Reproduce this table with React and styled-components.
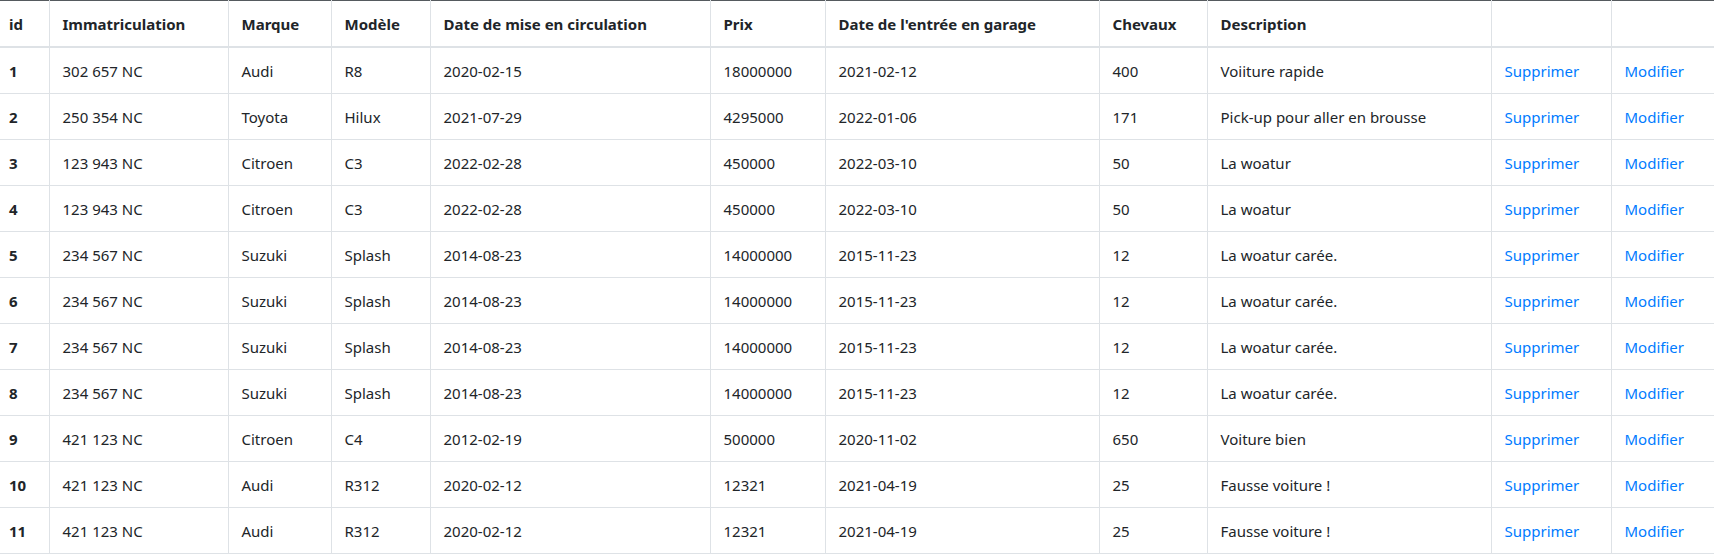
import React from "react";
import styled, { createGlobalStyle } from "styled-components";

const GlobalStyle = createGlobalStyle`
  html, body { margin: 0; padding: 0; background: #fff; }
  body {
    font-family: "Noto Sans", "Open Sans", "Liberation Sans", sans-serif;
    color: #212529;
  }
`;

const Table = styled.table`
  width: 1714px;
  table-layout: fixed;
  border-collapse: collapse;
  border-top: 1px solid #555a5e;
  font-size: 15px;
  line-height: 21px;
`;

const HeadCell = styled.th`
  text-align: left;
  font-weight: 700;
  padding: 13px 12px 11px ${(p) => (p.$first ? "9px" : "13px")};
  border-left: ${(p) => (p.$first ? "none" : "1px solid #dee2e6")};
  border-bottom: 2px solid #dee2e6;
  white-space: nowrap;
  vertical-align: bottom;
`;

const Cell = styled.td`
  padding: 13px 12px 11px ${(p) => (p.$first ? "9px" : "13px")};
  border-left: ${(p) => (p.$first ? "none" : "1px solid #dee2e6")};
  border-bottom: 1px solid #dee2e6;
  font-weight: ${(p) => (p.$bold ? 700 : 400)};
  white-space: nowrap;
  vertical-align: top;
`;

const ActionLink = styled.a`
  color: #007bff;
  text-decoration: none;
  cursor: pointer;
`;

const widths = [49, 179, 103, 99, 280, 115, 274, 108, 284, 120, 103];

const headers = [
  "id",
  "Immatriculation",
  "Marque",
  "Modèle",
  "Date de mise en circulation",
  "Prix",
  "Date de l'entrée en garage",
  "Chevaux",
  "Description",
  "",
  "",
];

const rows = [
  [1, "302 657 NC", "Audi", "R8", "2020-02-15", "18000000", "2021-02-12", "400", "Voiiture rapide"],
  [2, "250 354 NC", "Toyota", "Hilux", "2021-07-29", "4295000", "2022-01-06", "171", "Pick-up pour aller en brousse"],
  [3, "123 943 NC", "Citroen", "C3", "2022-02-28", "450000", "2022-03-10", "50", "La woatur"],
  [4, "123 943 NC", "Citroen", "C3", "2022-02-28", "450000", "2022-03-10", "50", "La woatur"],
  [5, "234 567 NC", "Suzuki", "Splash", "2014-08-23", "14000000", "2015-11-23", "12", "La woatur carée."],
  [6, "234 567 NC", "Suzuki", "Splash", "2014-08-23", "14000000", "2015-11-23", "12", "La woatur carée."],
  [7, "234 567 NC", "Suzuki", "Splash", "2014-08-23", "14000000", "2015-11-23", "12", "La woatur carée."],
  [8, "234 567 NC", "Suzuki", "Splash", "2014-08-23", "14000000", "2015-11-23", "12", "La woatur carée."],
  [9, "421 123 NC", "Citroen", "C4", "2012-02-19", "500000", "2020-11-02", "650", "Voiture bien"],
  [10, "421 123 NC", "Audi", "R312", "2020-02-12", "12321", "2021-04-19", "25", "Fausse voiture !"],
  [11, "421 123 NC", "Audi", "R312", "2020-02-12", "12321", "2021-04-19", "25", "Fausse voiture !"],
];

export default function App() {
  return (
    <>
      <GlobalStyle />
      <Table>
        <colgroup>
          {widths.map((w, i) => (
            <col key={i} style={{ width: w }} />
          ))}
        </colgroup>
        <thead>
          <tr>
            {headers.map((h, i) => (
              <HeadCell key={i} $first={i === 0}>
                {h}
              </HeadCell>
            ))}
          </tr>
        </thead>
        <tbody>
          {rows.map((r) => (
            <tr key={r[0]}>
              {r.map((v, i) => (
                <Cell key={i} $first={i === 0} $bold={i === 0}>
                  {v}
                </Cell>
              ))}
              <Cell>
                <ActionLink>Supprimer</ActionLink>
              </Cell>
              <Cell>
                <ActionLink>Modifier</ActionLink>
              </Cell>
            </tr>
          ))}
        </tbody>
      </Table>
    </>
  );
}
